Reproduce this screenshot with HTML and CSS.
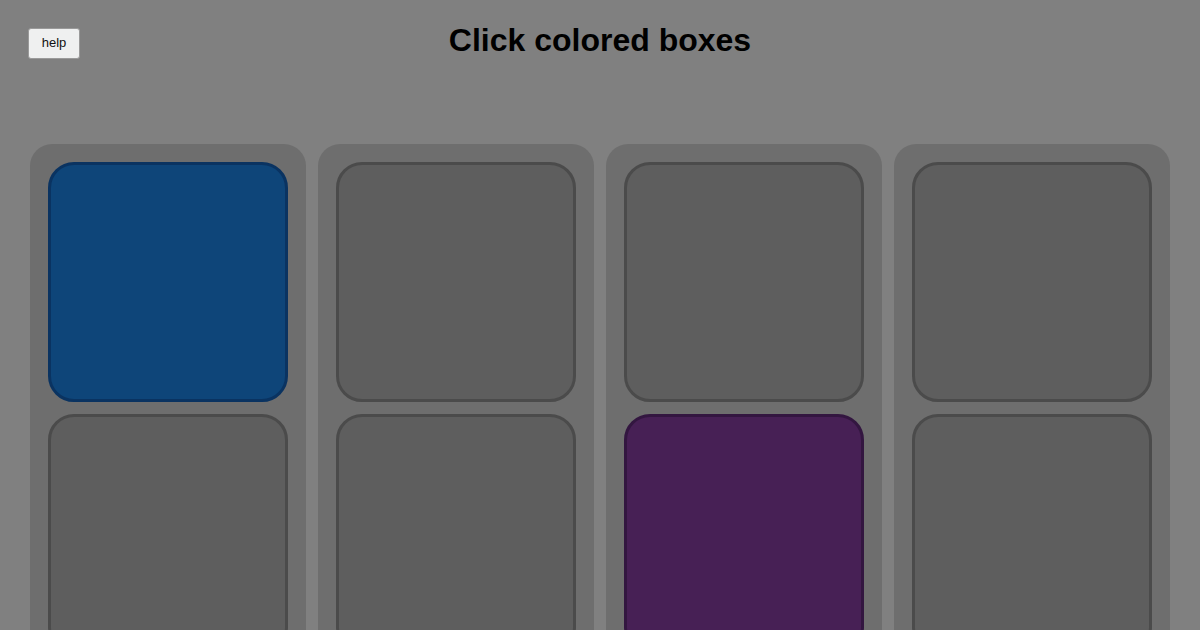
FILE: index.html
```html
<!DOCTYPE html>
<html lang="en">
<head>
    <meta charset="UTF-8">
    <title>Click colored boxes</title>
    <link rel="stylesheet" href="styles.css">
</head>
<body>
<div class="page">
    <div class="top">
        <div class="top-left"><button class="help" type="button">help</button></div>
        <h1 class="title">Click colored boxes</h1>
        <div></div>
    </div>

    <div class="board" id="board">
        <div class="col">
            <div class="box blue"></div>
            <div class="box"></div>
            <div class="box"></div>
        </div>
        <div class="col">
            <div class="box"></div>
            <div class="box"></div>
            <div class="box"></div>
        </div>
        <div class="col">
            <div class="box"></div>
            <div class="box purple"></div>
            <div class="box"></div>
        </div>
        <div class="col">
            <div class="box"></div>
            <div class="box"></div>
            <div class="box"></div>
        </div>
    </div>
</div>
</body>
</html>
```

FILE: styles.css
```css
html, body {
    margin: 0;
    padding: 0;
    background: #808080;
    font-family: "Liberation Sans", Arial, sans-serif;
}

.page {
    padding: 22px 30px 0 30px;
}

.top {
    display: grid;
    grid-template-columns: 1fr auto 1fr;
    align-items: start;
}

.top-left {
    padding-top: 6px;
    margin-left: -2px;
}

.help {
    display: block;
    font-family: "Liberation Sans", Arial, sans-serif;
    font-size: 13px;
    width: 52px;
    height: 31px;
    padding: 0 0 2px 0;
    color: #111;
    background: #eff0f0;
    border: 1px solid #9a9a9a;
    border-radius: 3px;
    cursor: pointer;
}

.title {
    margin: 0;
    font-size: 32px;
    line-height: 37px;
    font-weight: bold;
    color: #000;
}

.board {
    margin-top: 85px;
    display: grid;
    grid-template-columns: repeat(4, 1fr);
    gap: 12px;
}

.col {
    background: #6e6e6e;
    border-radius: 22px;
    padding: 18px;
    display: flex;
    flex-direction: column;
    gap: 12px;
}

.box {
    height: 240px;
    box-sizing: border-box;
    background: #5e5e5e;
    border: 3px solid #4b4b4b;
    border-radius: 26px;
    cursor: pointer;
}

.box.blue {
    background: #0e4579;
    border-color: #0a3361;
}

.box.purple {
    background: #472055;
    border-color: #331640;
}
```
